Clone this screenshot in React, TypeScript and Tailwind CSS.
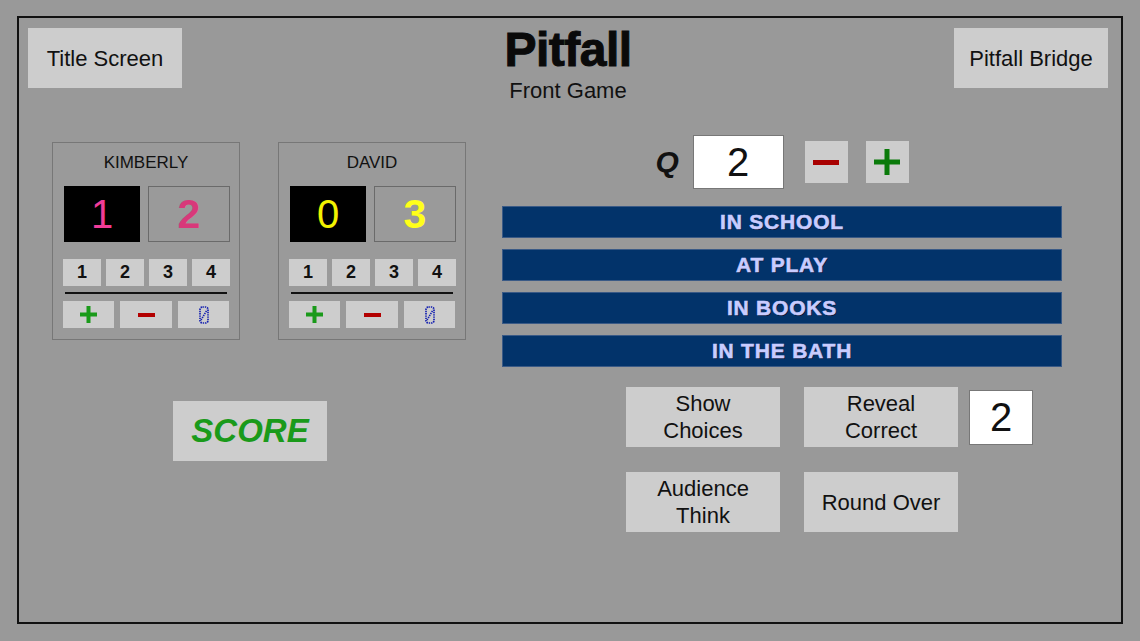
import type { ReactNode } from 'react'

const FONT = { fontFamily: '"Liberation Sans", Arial, sans-serif' }

type Player = {
  name: string
  round: string
  total: string
  roundClass: string
  totalClass: string
}

const PLAYERS: Player[] = [
  {
    name: 'KIMBERLY',
    round: '1',
    total: '2',
    roundClass: 'text-[#f03c98]',
    totalClass: 'text-[#d8397a]'
  },
  {
    name: 'DAVID',
    round: '0',
    total: '3',
    roundClass: 'text-[#f2f200]',
    totalClass: 'text-[#ffff1a]'
  }
]

const ANSWERS = ['IN SCHOOL', 'AT PLAY', 'IN BOOKS', 'IN THE BATH']

function PlusSign({ size, bar, color }: { size: number; bar: number; color: string }) {
  const o = (size - bar) / 2
  return (
    <svg width={size} height={size} viewBox={`0 0 ${size} ${size}`}>
      <rect x={0} y={o} width={size} height={bar} fill={color} />
      <rect x={o} y={0} width={bar} height={size} fill={color} />
    </svg>
  )
}

function MinusSign({ size, bar, color }: { size: number; bar: number; color: string }) {
  return (
    <svg width={size} height={bar} viewBox={`0 0 ${size} ${bar}`}>
      <rect x={0} y={0} width={size} height={bar} fill={color} />
    </svg>
  )
}

// dotted slashed zero used as the "reset" glyph
function ResetZero() {
  return (
    <svg width="12" height="20" viewBox="0 0 12 20">
      <rect
        x="2"
        y="2"
        width="8"
        height="16"
        rx="2.5"
        fill="none"
        stroke="#1420b0"
        strokeWidth="1.7"
        strokeDasharray="1.4 0.9"
      />
      <line
        x1="3"
        y1="15"
        x2="9"
        y2="5"
        stroke="#1420b0"
        strokeWidth="1.6"
        strokeDasharray="1.4 0.9"
      />
    </svg>
  )
}

function GrayButton({ className, children }: { className: string; children: ReactNode }) {
  return (
    <div className={`flex items-center justify-center bg-[#cdcdcd] text-center ${className}`}>
      {children}
    </div>
  )
}

function PlayerCard({ player }: { player: Player }) {
  return (
    <div className="flex h-[198px] w-[188px] flex-col border border-[#777777] bg-[#9a9a9a]">
      <div className="mt-[10px] h-[20px] text-center text-[17px] leading-[20px] text-[#111]">
        {player.name}
      </div>
      <div className="mt-[13px] flex gap-[8px] pl-[11px]">
        <div
          className={`flex h-[56px] w-[76px] items-center justify-center bg-black text-[40px] leading-none ${player.roundClass}`}
        >
          {player.round}
        </div>
        <div
          className={`flex h-[56px] w-[82px] items-center justify-center border border-[#6a6a6a] text-[41px] font-bold leading-none ${player.totalClass}`}
        >
          {player.total}
        </div>
      </div>
      <div className="mt-[17px] flex gap-[5px] pl-[10px]">
        {['1', '2', '3', '4'].map((n) => (
          <GrayButton key={n} className="h-[27px] w-[38px] text-[18px] font-bold text-[#111]">
            {n}
          </GrayButton>
        ))}
      </div>
      <div className="mx-[12px] mt-[6px] h-[2px] bg-[#111]" />
      <div className="mt-[7px] flex gap-[6px] pl-[10px]">
        <GrayButton className="h-[27px] w-[51px]">
          <PlusSign size={17} bar={4} color="#1a9a1a" />
        </GrayButton>
        <GrayButton className="h-[27px] w-[52px]">
          <MinusSign size={17} bar={4} color="#b30000" />
        </GrayButton>
        <GrayButton className="h-[27px] w-[51px]">
          <ResetZero />
        </GrayButton>
      </div>
    </div>
  )
}

export default function App() {
  return (
    <div className="h-[641px] w-[1140px] bg-[#999999] pl-[17px] pt-[16px]" style={FONT}>
      <div className="h-[608px] w-[1106px] border-2 border-[#111]">
        {/* header */}
        <div className="grid grid-cols-[1fr_auto_1fr] items-start pl-[9px] pr-[13px] pt-[8px]">
          <div>
            <GrayButton className="mt-[2px] h-[60px] w-[154px] text-[22px] text-[#111]">
              Title Screen
            </GrayButton>
          </div>
          <div className="flex flex-col items-center">
            <div className="text-[48px] font-black leading-none tracking-[-0.5px] text-[#0a0a0a] [-webkit-text-stroke:1px_#0a0a0a]">
              Pitfall
            </div>
            <div className="mt-[6px] text-[22px] leading-none text-[#111]">Front Game</div>
          </div>
          <div className="flex justify-end">
            <GrayButton className="mt-[2px] h-[60px] w-[154px] text-[22px] text-[#111]">
              Pitfall Bridge
            </GrayButton>
          </div>
        </div>

        {/* body */}
        <div className="mt-[33px] flex items-start gap-[36px] pl-[33px]">
          <div className="flex w-[414px] flex-col">
            <div className="mt-[7px] flex gap-[38px]">
              {PLAYERS.map((p) => (
                <PlayerCard key={p.name} player={p} />
              ))}
            </div>
            <GrayButton className="ml-[121px] mt-[61px] h-[60px] w-[154px]">
              <span className="text-[33px] font-bold italic text-[#1a9a1a]">SCORE</span>
            </GrayButton>
          </div>

          <div className="flex w-[560px] flex-col">
            <div className="flex h-[54px] items-center justify-center">
              <span className="w-[22px] text-[30px] font-bold italic leading-none text-[#111]">
                Q
              </span>
              <div className="ml-[15px] flex h-[54px] w-[91px] items-center justify-center border border-[#777] bg-white text-[40px] leading-none text-[#111]">
                2
              </div>
              <GrayButton className="ml-[21px] h-[42px] w-[43px]">
                <MinusSign size={26} bar={5} color="#a80000" />
              </GrayButton>
              <GrayButton className="ml-[18px] h-[42px] w-[43px]">
                <PlusSign size={26} bar={5} color="#0a7a0a" />
              </GrayButton>
            </div>

            <div className="mt-[17px] flex flex-col gap-[11px]">
              {ANSWERS.map((a) => (
                <div
                  key={a}
                  className="flex h-[32px] items-center justify-center border border-[#3a5a86] bg-[#02336a] text-[21px] font-bold tracking-[0.8px] text-[#c8ccff] [-webkit-text-stroke:0.6px_#c8ccff] [text-shadow:1px_1px_0_#0a1430]"
                >
                  {a}
                </div>
              ))}
            </div>

            <div className="ml-[124px] mt-[20px] flex items-center">
              <GrayButton className="h-[60px] w-[154px] text-[22px] leading-[27px] text-[#111]">
                Show
                <br />
                Choices
              </GrayButton>
              <GrayButton className="ml-[24px] h-[60px] w-[154px] text-[22px] leading-[27px] text-[#111]">
                Reveal
                <br />
                Correct
              </GrayButton>
              <div className="ml-[11px] flex h-[55px] w-[64px] items-center justify-center border border-[#777] bg-white text-[40px] leading-none text-[#111]">
                2
              </div>
            </div>
            <div className="ml-[124px] mt-[25px] flex items-center">
              <GrayButton className="h-[60px] w-[154px] text-[22px] leading-[27px] text-[#111]">
                Audience
                <br />
                Think
              </GrayButton>
              <GrayButton className="ml-[24px] h-[60px] w-[154px] text-[22px] text-[#111]">
                Round Over
              </GrayButton>
            </div>
          </div>
        </div>
      </div>
    </div>
  )
}
